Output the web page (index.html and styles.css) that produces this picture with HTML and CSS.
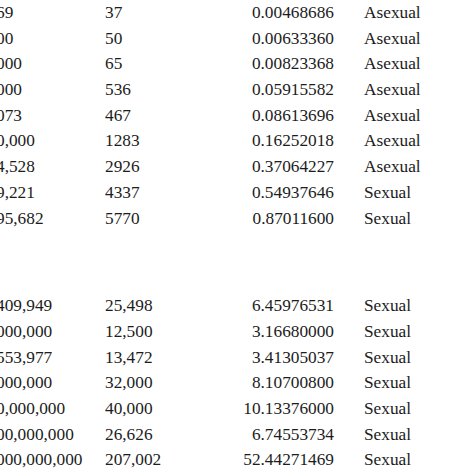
FILE: index.html
```html
<!DOCTYPE html>
<html>
<head>
<meta charset="utf-8">
<link rel="stylesheet" href="styles.css">
</head>
<body>
<div class="page">
  <div class="group">
    <div class="row"><span class="c1">69</span><span class="c2">37</span><span class="c3">0.00468686</span><span class="c4">Asexual</span></div>
    <div class="row"><span class="c1">00</span><span class="c2">50</span><span class="c3">0.00633360</span><span class="c4">Asexual</span></div>
    <div class="row"><span class="c1">000</span><span class="c2">65</span><span class="c3">0.00823368</span><span class="c4">Asexual</span></div>
    <div class="row"><span class="c1">000</span><span class="c2">536</span><span class="c3">0.05915582</span><span class="c4">Asexual</span></div>
    <div class="row"><span class="c1">073</span><span class="c2">467</span><span class="c3">0.08613696</span><span class="c4">Asexual</span></div>
    <div class="row"><span class="c1">0,000</span><span class="c2">1283</span><span class="c3">0.16252018</span><span class="c4">Asexual</span></div>
    <div class="row"><span class="c1">4,528</span><span class="c2">2926</span><span class="c3">0.37064227</span><span class="c4">Asexual</span></div>
    <div class="row"><span class="c1">9,221</span><span class="c2">4337</span><span class="c3">0.54937646</span><span class="c4">Sexual</span></div>
    <div class="row"><span class="c1">95,682</span><span class="c2">5770</span><span class="c3">0.87011600</span><span class="c4">Sexual</span></div>
  </div>
  <div class="group group-second">
    <div class="row"><span class="c1">409,949</span><span class="c2">25,498</span><span class="c3">6.45976531</span><span class="c4">Sexual</span></div>
    <div class="row"><span class="c1">000,000</span><span class="c2">12,500</span><span class="c3">3.16680000</span><span class="c4">Sexual</span></div>
    <div class="row"><span class="c1">553,977</span><span class="c2">13,472</span><span class="c3">3.41305037</span><span class="c4">Sexual</span></div>
    <div class="row"><span class="c1">000,000</span><span class="c2">32,000</span><span class="c3">8.10700800</span><span class="c4">Sexual</span></div>
    <div class="row"><span class="c1">0,000,000</span><span class="c2">40,000</span><span class="c3">10.13376000</span><span class="c4">Sexual</span></div>
    <div class="row"><span class="c1">00,000,000</span><span class="c2">26,626</span><span class="c3">6.74553734</span><span class="c4">Sexual</span></div>
    <div class="row"><span class="c1">000,000,000</span><span class="c2">207,002</span><span class="c3">52.44271469</span><span class="c4">Sexual</span></div>
  </div>
</div>
</body>
</html>
```
FILE: styles.css
```css
html, body {
  margin: 0;
  padding: 0;
  background: #ffffff;
}
body {
  width: 474px;
  height: 474px;
  overflow: hidden;
}
.page {
  margin-left: -4px;
  padding-top: 0;
  font-family: "Liberation Serif", "Times New Roman", serif;
  font-size: 17.3px;
  color: #1c1c1c;
}
.group {
  display: flex;
  flex-direction: column;
}
.group-second {
  margin-top: 62px;
}
.row {
  display: grid;
  grid-template-columns: 109px 130px 99px 1fr;
  height: 25.7px;
  line-height: 25.7px;
  white-space: nowrap;
}
.c3 {
  text-align: right;
}
.c4 {
  padding-left: 30px;
}
```
